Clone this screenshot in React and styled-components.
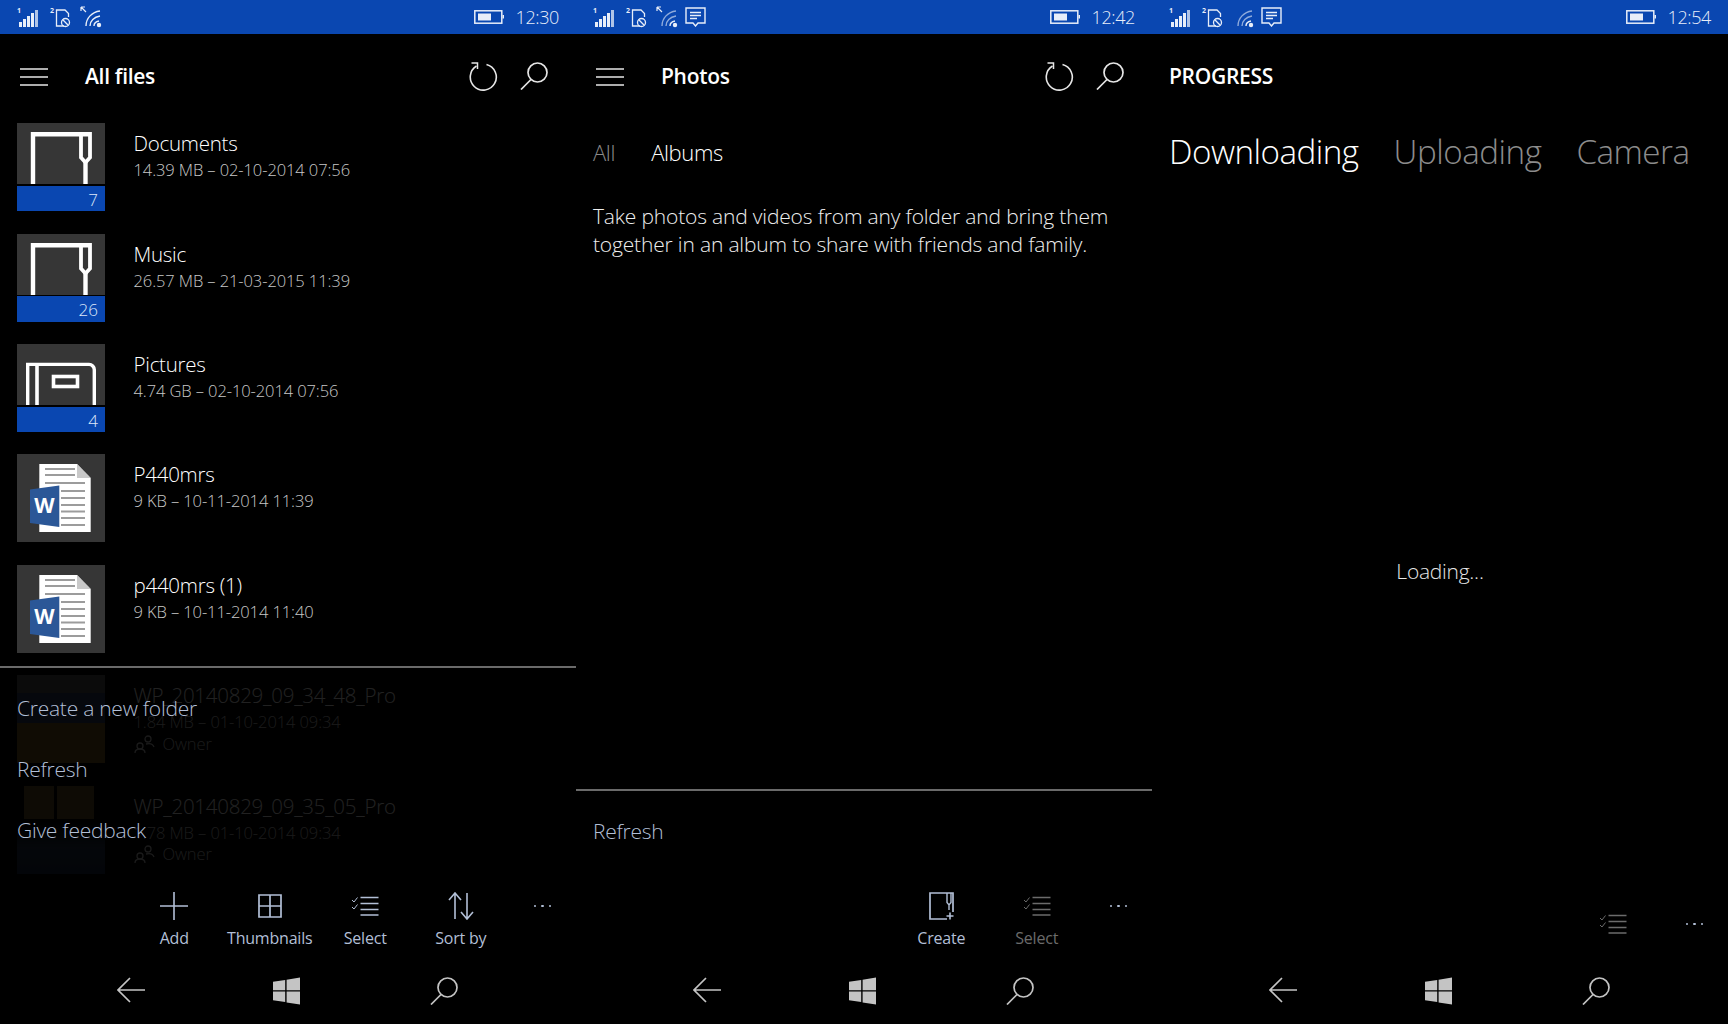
import React from 'react'
import styled, { createGlobalStyle } from 'styled-components'

const GlobalStyle = createGlobalStyle`
  html, body {
    margin: 0;
    background: #000;
  }
  * {
    box-sizing: border-box;
  }
`

const FONT = '"Open Sans", "Noto Sans", "Liberation Sans", sans-serif'
const BLUE = '#0a47b1'
const MUTED = '#b2bfd6'

const Page = styled.div`
  display: flex;
  width: 1728px;
  height: 1024px;
  background: #000;
  font-family: ${FONT};
  overflow: hidden;
`

const Phone = styled.section`
  width: 576px;
  height: 1024px;
  display: flex;
  flex-direction: column;
`

const StatusBar = styled.header`
  height: 33.5px;
  flex: none;
  background: ${BLUE};
  display: flex;
  align-items: center;
  justify-content: space-between;
  padding-left: 17px;
  padding-right: 17px;
  color: #e8eef9;
`

const StatusGroup = styled.div`
  display: flex;
  align-items: center;
`

const Clock = styled.span`
  font-size: 18px;
  font-weight: 300;
  letter-spacing: -0.4px;
  line-height: 1;
`

const TopBar = styled.div`
  height: 87px;
  flex: none;
  display: flex;
  align-items: center;
  padding: 0 28px 0 ${props => (props.$plain ? 17 : 20)}px;
`

const Title = styled.h1`
  margin: 0 0 3px ${props => (props.$plain ? 0 : 37)}px;
  font-size: 21px;
  font-weight: 600;
  letter-spacing: -0.3px;
  color: #fff;
  flex: 1;
`

const TopActions = styled.div`
  display: flex;
  align-items: center;
  gap: 22px;
  margin-bottom: 2px;
`

const Main = styled.main`
  flex: 1;
  min-height: 0;
  position: relative;
  display: flex;
  flex-direction: column;
  overflow: hidden;
`

const FileList = styled.div`
  display: flex;
  flex-direction: column;
  gap: 22.4px;
  padding: 2.8px 0 0 17px;
`

const FileRow = styled.div`
  display: flex;
  height: 88px;
  flex: none;
  gap: 28.5px;
`

const Thumb = styled.div`
  width: 88px;
  height: 88px;
  flex: none;
  display: flex;
  flex-direction: column;
  background: ${props => (props.$full ? '#363636' : 'transparent')};
`

const ThumbArt = styled.svg`
  display: block;
  background: #363636;
`

const Badge = styled.div`
  margin-top: 1.5px;
  height: 25.5px;
  background: ${BLUE};
  color: #dde8fa;
  font-size: 17px;
  font-weight: 300;
  text-align: right;
  line-height: 28px;
  padding-right: 7px;
`

const PhotoThumb = styled.div`
  width: 88px;
  height: 88px;
  flex: none;
  background: ${props => props.$bg};
`

const FileInfo = styled.div`
  padding-top: 7px;
  white-space: nowrap;
`

const FileName = styled.div`
  font-size: 20.5px;
  font-weight: 300;
  line-height: 27px;
  letter-spacing: -0.25px;
  color: #fff;
`

const FileMeta = styled.div`
  font-size: 16.5px;
  font-weight: 300;
  line-height: 25.5px;
  letter-spacing: -0.1px;
  color: #c8c8c8;
`

const OwnerLine = styled(FileMeta)`
  display: flex;
  align-items: center;
  gap: 7px;
  font-size: 16.5px;
  margin-top: -4px;
`

const Menu = styled.div`
  border-top: 2px solid #6a6a6a;
  padding-top: 9px;
  display: flex;
  flex-direction: column;
`

const OverlayMenu = styled(Menu)`
  position: absolute;
  top: 545.5px;
  left: 0;
  right: 0;
  bottom: 0;
  background: rgba(0, 0, 0, 0.87);
`

const BottomMenu = styled(Menu)`
  margin-top: auto;
  padding-top: 9.5px;
  padding-bottom: 23px;
`

const MenuItem = styled.div`
  height: 61.4px;
  display: flex;
  align-items: center;
  padding-left: 17px;
  font-size: 21px;
  font-weight: 300;
  letter-spacing: -0.25px;
  color: ${MUTED};
`

const SmallTabs = styled.div`
  display: flex;
  gap: 36px;
  padding: 16px 17px 0;
`

const SmallTab = styled.span`
  font-size: 22px;
  font-weight: 300;
  letter-spacing: -0.35px;
  line-height: 30px;
  color: ${props => (props.$active ? '#fff' : '#8a8a8a')};
`

const Intro = styled.p`
  margin: 35px 0 0;
  padding: 0 17px;
  font-size: 21px;
  font-weight: 300;
  line-height: 28.5px;
  letter-spacing: -0.17px;
  color: #eee;
  white-space: pre-line;
`

const Pivot = styled.div`
  display: flex;
  gap: 35px;
  padding: 6px 17px 0;
  white-space: nowrap;
`

const PivotTab = styled.span`
  font-size: 33.2px;
  font-weight: 300;
  line-height: 50px;
  letter-spacing: -0.5px;
  color: ${props => (props.$active ? '#fff' : '#8c8c8c')};
`

const Loading = styled.div`
  flex: 1;
  display: flex;
  align-items: center;
  justify-content: center;
  padding-top: 81px;
  font-size: 21px;
  font-weight: 300;
  letter-spacing: -0.25px;
  color: #e6e6e6;
`

const AppBar = styled.div`
  height: 85px;
  flex: none;
  display: flex;
  justify-content: flex-end;
  padding-top: ${props => (props.$compact ? 25 : 7)}px;
`

const AppButton = styled.div`
  width: 95.5px;
  display: flex;
  flex-direction: column;
  align-items: center;
  color: ${props => (props.$disabled ? '#6b6b6b' : MUTED)};
`

const AppLabel = styled.span`
  font-size: 16px;
  font-weight: 400;
  line-height: 22px;
  margin-top: 7px;
  letter-spacing: -0.2px;
`

const MoreButton = styled.div`
  width: 67.5px;
  height: 28px;
  display: flex;
  align-items: center;
  justify-content: center;
  gap: 5px;
`

const Dot = styled.i`
  width: 2.5px;
  height: 2.5px;
  border-radius: 50%;
  background: ${MUTED};
`

const NavBar = styled.nav`
  height: 54px;
  flex: none;
  display: flex;
  justify-content: center;
  color: #c4c4c4;
`

const NavItem = styled.div`
  width: 156.7px;
  display: flex;
  justify-content: center;
  padding-top: 7px;
  padding-right: ${props => props.$nudge || 0}px;
`

const Svg = ({ size = 28, w, h, children, ...rest }) => (
  <svg width={w || size} height={h || size} viewBox={`0 0 ${w || size} ${h || size}`} fill="none" stroke="currentColor" {...rest}>
    {children}
  </svg>
)

const SignalIcon = () => (
  <Svg w={22} h={22} style={{ marginRight: 11 }}>
    <text x="0" y="7" fontSize="7" fontWeight="700" fontFamily={FONT} fill="currentColor" stroke="none">1</text>
    <g fill="currentColor" stroke="none">
      <rect x="2" y="16" width="3" height="5" />
      <rect x="6" y="13" width="3" height="8" />
      <rect x="10" y="10" width="3" height="11" />
      <rect x="14" y="7" width="3" height="14" />
      <rect x="18" y="4" width="3" height="17" opacity="0.75" />
    </g>
  </Svg>
)

const SimIcon = () => (
  <Svg w={22} h={22} style={{ marginRight: 8 }}>
    <text x="0" y="6.5" fontSize="7" fontWeight="700" fontFamily={FONT} fill="currentColor" stroke="none">2</text>
    <path d="M14 20H6.500V4H15l3.500 3.500V11" strokeWidth="1.3" />
    <circle cx="15.5" cy="16.5" r="4" strokeWidth="1.3" />
    <path d="M12.800 13.800l5.400 5.400" strokeWidth="1.3" />
  </Svg>
)

const WifiIcon = ({ arrow, dim }) => (
  <Svg w={24} h={22} style={{ marginRight: 5 }}>
    {arrow && <path d="M1 1l5 5M1 1h4M1 1v4" strokeWidth="1.2" />}
    <g strokeWidth="1.4">
      <path d="M6 20C6 12 12 6 20 5" opacity={dim ? 0.6 : 1} />
      <path d="M10 20C10 15 14 11 20 10" opacity={dim ? 0.6 : 1} />
      <path d="M14 20C14 17.500 16 15.500 19 15" />
    </g>
    <circle cx="19" cy="19" r="2.2" fill="currentColor" stroke="none" />
  </Svg>
)

const MessageIcon = () => (
  <Svg w={21} h={20}>
    <path d="M1 1h19v15h-7l-2.500 3L8 16H1z" strokeWidth="1.4" />
    <path d="M5 5.500h11M5 8.500h11M5 11.500h7" strokeWidth="1.3" />
  </Svg>
)

const BatteryIcon = () => (
  <Svg w={30} h={14} style={{ marginRight: 11.5 }}>
    <rect x="0.8" y="0.8" width="27" height="12.4" strokeWidth="1.5" />
    <rect x="4" y="3.5" width="13" height="7" fill="currentColor" stroke="none" />
    <rect x="28.5" y="5" width="1.5" height="3.5" fill="currentColor" stroke="none" />
  </Svg>
)

const Hamburger = () => (
  <Svg w={28} h={18} color="#e6e6e6">
    <path d="M0 1h28M0 9h28M0 17h28" strokeWidth="1.6" />
  </Svg>
)

const RefreshIcon = () => (
  <Svg w={30} h={30} color="#e6e6e6">
    <path d="M8.500 5A13 13 0 1 0 18.500 3.500" strokeWidth="1.6" />
    <path d="M3.500 2H9.500V8" strokeWidth="1.5" />
  </Svg>
)

const SearchIcon = ({ color = '#e6e6e6' }) => (
  <Svg w={28} h={28} color={color}>
    <circle cx="17.5" cy="10.5" r="9.5" strokeWidth="1.7" />
    <path d="M11 17.500L1 27.500" strokeWidth="1.7" />
  </Svg>
)

const BackIcon = () => (
  <Svg w={28} h={26}>
    <path d="M28 13H1M13 1L1 13l12 12" strokeWidth="1.7" />
  </Svg>
)

const WindowsIcon = () => (
  <Svg w={27} h={28} fill="currentColor" stroke="none">
    <path d="M0 4.800l12.200-1.800v10.200H0zM13.600 2.800L27 .6v12.600H13.600zM0 14.600h12.200v10.400L0 23.200zM13.600 14.600H27v13l-13.400-2z" />
  </Svg>
)

const PlusIcon = () => (
  <Svg>
    <path d="M14 0v28M0 14h28" strokeWidth="1.6" />
  </Svg>
)

const GridIcon = () => (
  <Svg>
    <path d="M3 3h22v22H3zM14 3v22M3 14h22" strokeWidth="1.7" />
  </Svg>
)

const SelectIcon = () => (
  <Svg>
    <path d="M9.500 5.500h18M9.500 11.500h18M9.500 17.500h18M9.500 23h18" strokeWidth="1.7" />
    <path d="M1 8l2 2 3.500-4.500M1 15l2 2 3.500-4.500" strokeWidth="1" />
  </Svg>
)

const SortIcon = () => (
  <Svg>
    <path d="M8 27V1M2 8l6-7 6 7M20 1v26M14 20l6 7 6-7" strokeWidth="1.6" />
  </Svg>
)

const CreateIcon = () => (
  <Svg>
    <path d="M20 27H3V1h23v19" strokeWidth="1.7" />
    <path d="M20 1v9.500l2 2.500 2-2.500V1M22 13v5" strokeWidth="1.4" />
    <path d="M23 20.500v7M19.500 24h7" strokeWidth="1.6" />
  </Svg>
)

const OwnerIcon = () => (
  <Svg w={22} h={18}>
    <circle cx="6" cy="11" r="3" strokeWidth="1.3" />
    <path d="M1 18c0-3 2-4 5-4s5 1 5 4" strokeWidth="1.3" />
    <circle cx="14" cy="4" r="3" strokeWidth="1.3" />
    <path d="M12 9c4-1 7 0 8 3" strokeWidth="1.3" />
  </Svg>
)

const FolderArt = () => (
  <ThumbArt width="88" height="61" viewBox="0 0 88 61">
    <path d="M16 61V11.200h56" stroke="#fff" strokeWidth="4.4" fill="none" />
    <path d="M64 9v25.500l4.500 5 4.500-5V9" stroke="#fff" strokeWidth="3.8" fill="none" />
    <path d="M68.500 39v22" stroke="#fff" strokeWidth="4.4" />
  </ThumbArt>
)

const PicturesArt = () => (
  <ThumbArt width="88" height="61" viewBox="0 0 88 61" fill="none" stroke="#fff">
    <path d="M10.700 61V20.400H72a5.300 5.300 0 0 1 5.300 5.300V61" strokeWidth="3.4" />
    <path d="M20 61V21" strokeWidth="3.6" />
    <rect x="36.5" y="32.5" width="24" height="10" strokeWidth="3.6" />
  </ThumbArt>
)

const WordArt = () => (
  <svg width="88" height="88" viewBox="0 0 88 88">
    <path d="M22.300 10H60l13.700 14v54H22.300z" fill="#fff" />
    <path d="M60 10v14h13.700z" fill="#c9c9c9" />
    <path d="M28 15h30M28 21h30M28 29h40M44 37h24M44 44h24M44 51h24M44 57.500h24M44 64h24M44 71h24" stroke="#9c9c9c" strokeWidth="2" />
    <path d="M13 35.600L42.300 31.600V73L13 69z" fill="#2b5797" />
    <text x="27.5" y="59" fontSize="21" fontWeight="700" fontFamily={FONT} fill="#fff" textAnchor="middle">W</text>
  </svg>
)

const files = [
  { name: 'Documents', meta: '14.39 MB – 02-10-2014 07:56', count: 7, art: <FolderArt /> },
  { name: 'Music', meta: '26.57 MB – 21-03-2015 11:39', count: 26, art: <FolderArt /> },
  { name: 'Pictures', meta: '4.74 GB – 02-10-2014 07:56', count: 4, art: <PicturesArt /> },
  { name: 'P440mrs', meta: '9 KB – 10-11-2014 11:39', word: true },
  { name: 'p440mrs (1)', meta: '9 KB – 10-11-2014 11:40', word: true },
  {
    name: 'WP_20140829_09_34_48_Pro',
    meta: '1.84 MB – 01-10-2014 09:34',
    owner: true,
    photo: 'linear-gradient(180deg, #5a5a5a 0 20%, #2e3f62 20% 55%, #7a5c24 55% 100%)',
  },
  {
    name: 'WP_20140829_09_35_05_Pro',
    meta: '1.78 MB – 01-10-2014 09:34',
    owner: true,
    photo: 'linear-gradient(90deg, #000 0 8%, #6a5628 8% 42%, #000 42% 46%, #6a5628 46% 88%, #000 88%) top / 100% 38% no-repeat, linear-gradient(180deg, #000 38%, #26344e 70%, #1c2a48 100%)',
  },
]

const Status = ({ time, arrow = true, dim, message }) => (
  <StatusBar>
    <StatusGroup>
      <SignalIcon />
      <SimIcon />
      <WifiIcon arrow={arrow} dim={dim} />
      {message && <MessageIcon />}
    </StatusGroup>
    <StatusGroup>
      <BatteryIcon />
      <Clock>{time}</Clock>
    </StatusGroup>
  </StatusBar>
)

const Nav = () => (
  <NavBar>
    <NavItem><BackIcon /></NavItem>
    <NavItem $nudge={3}><WindowsIcon /></NavItem>
    <NavItem $nudge={2}><SearchIcon color="currentColor" /></NavItem>
  </NavBar>
)

const More = () => (
  <MoreButton>
    <Dot />
    <Dot />
    <Dot />
  </MoreButton>
)

const Header = ({ title }) => (
  <TopBar>
    <Hamburger />
    <Title>{title}</Title>
    <TopActions>
      <RefreshIcon />
      <SearchIcon />
    </TopActions>
  </TopBar>
)

export default function App() {
  return (
    <Page>
      <GlobalStyle />

      <Phone>
        <Status time="12:30" />
        <Header title="All files" />
        <Main>
          <FileList>
            {files.map(file => (
              <FileRow key={file.name}>
                {file.photo ? (
                  <PhotoThumb $bg={file.photo} />
                ) : (
                  <Thumb $full={file.word}>
                    {file.word ? <WordArt /> : file.art}
                    {file.count && <Badge>{file.count}</Badge>}
                  </Thumb>
                )}
                <FileInfo>
                  <FileName>{file.name}</FileName>
                  <FileMeta>{file.meta}</FileMeta>
                  {file.owner && (
                    <OwnerLine>
                      <OwnerIcon />
                      Owner
                    </OwnerLine>
                  )}
                </FileInfo>
              </FileRow>
            ))}
          </FileList>
          <OverlayMenu>
            <MenuItem>Create a new folder</MenuItem>
            <MenuItem>Refresh</MenuItem>
            <MenuItem>Give feedback</MenuItem>
          </OverlayMenu>
        </Main>
        <AppBar>
          <AppButton><PlusIcon /><AppLabel>Add</AppLabel></AppButton>
          <AppButton><GridIcon /><AppLabel>Thumbnails</AppLabel></AppButton>
          <AppButton><SelectIcon /><AppLabel>Select</AppLabel></AppButton>
          <AppButton><SortIcon /><AppLabel>Sort by</AppLabel></AppButton>
          <More />
        </AppBar>
        <Nav />
      </Phone>

      <Phone>
        <Status time="12:42" dim message />
        <Header title="Photos" />
        <Main>
          <SmallTabs>
            <SmallTab>All</SmallTab>
            <SmallTab $active>Albums</SmallTab>
          </SmallTabs>
          <Intro>
            {'Take photos and videos from any folder and bring them\ntogether in an album to share with friends and family.'}
          </Intro>
          <BottomMenu>
            <MenuItem>Refresh</MenuItem>
          </BottomMenu>
        </Main>
        <AppBar>
          <AppButton><CreateIcon /><AppLabel>Create</AppLabel></AppButton>
          <AppButton $disabled><SelectIcon /><AppLabel>Select</AppLabel></AppButton>
          <More />
        </AppBar>
        <Nav />
      </Phone>

      <Phone>
        <Status time="12:54" arrow={false} dim message />
        <TopBar $plain>
          <Title $plain>PROGRESS</Title>
        </TopBar>
        <Main>
          <Pivot>
            <PivotTab $active>Downloading</PivotTab>
            <PivotTab>Uploading</PivotTab>
            <PivotTab>Camera</PivotTab>
          </Pivot>
          <Loading>Loading...</Loading>
        </Main>
        <AppBar $compact>
          <AppButton $disabled><SelectIcon /></AppButton>
          <More />
        </AppBar>
        <Nav />
      </Phone>
    </Page>
  )
}
